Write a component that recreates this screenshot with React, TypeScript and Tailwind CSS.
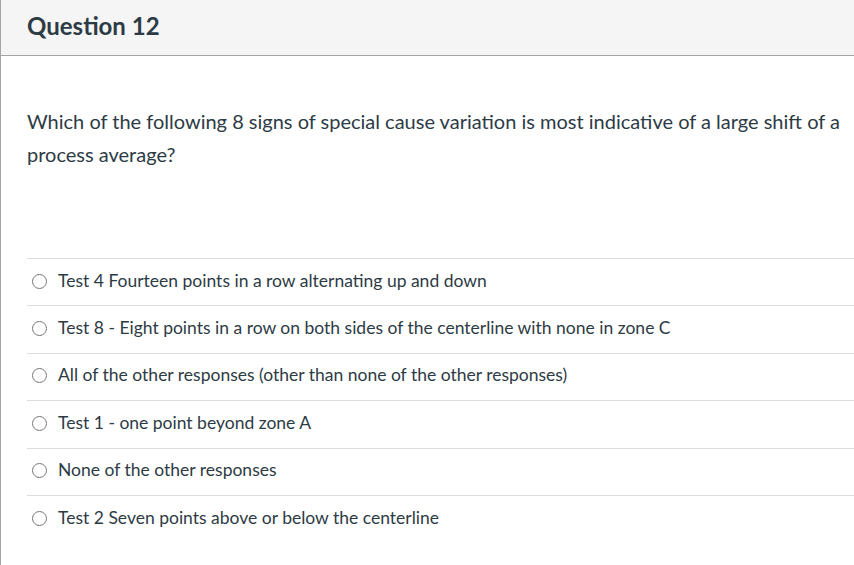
import React from 'react';

const answers = [
  'Test 4 Fourteen points in a row alternating up and down',
  'Test 8 - Eight points in a row on both sides of the centerline with none in zone C',
  'All of the other responses (other than none of the other responses)',
  'Test 1 - one point beyond zone A',
  'None of the other responses',
  'Test 2 Seven points above or below the centerline',
];

export default function App() {
  return (
    <div className="h-[565px] w-[854px] overflow-hidden bg-white text-[#2d3b45]" style={{ fontFamily: 'Lato, "Open Sans", sans-serif' }}>
      <div className="h-full border-l border-[#a5a5a5]">
        <div className="h-[56px] bg-[#f5f5f5] border-b border-[#a5a5a5] pl-[26px] flex items-center">
          <h2 className="text-[24px] font-bold leading-none pb-[4px]">Question 12</h2>
        </div>
        <div className="pl-[26px] pt-[49px]">
          <p className="text-[20px] leading-[33px] pr-2">
            Which of the following 8 signs of special cause variation is most indicative of a large shift of a process average?
          </p>
          <div className="mt-[87px]">
            {answers.map((a) => (
              <label key={a} className="flex items-center h-[47.4px] border-t border-[#dcdcdc] pl-[5px] gap-[11px]">
                <span className="w-[15px] h-[15px] rounded-full border-[1.5px] border-[#777] bg-white shrink-0 mb-[2px]" />
                <span className="text-[17.5px] pb-[3px]">{a}</span>
              </label>
            ))}
          </div>
        </div>
      </div>
    </div>
  );
}
